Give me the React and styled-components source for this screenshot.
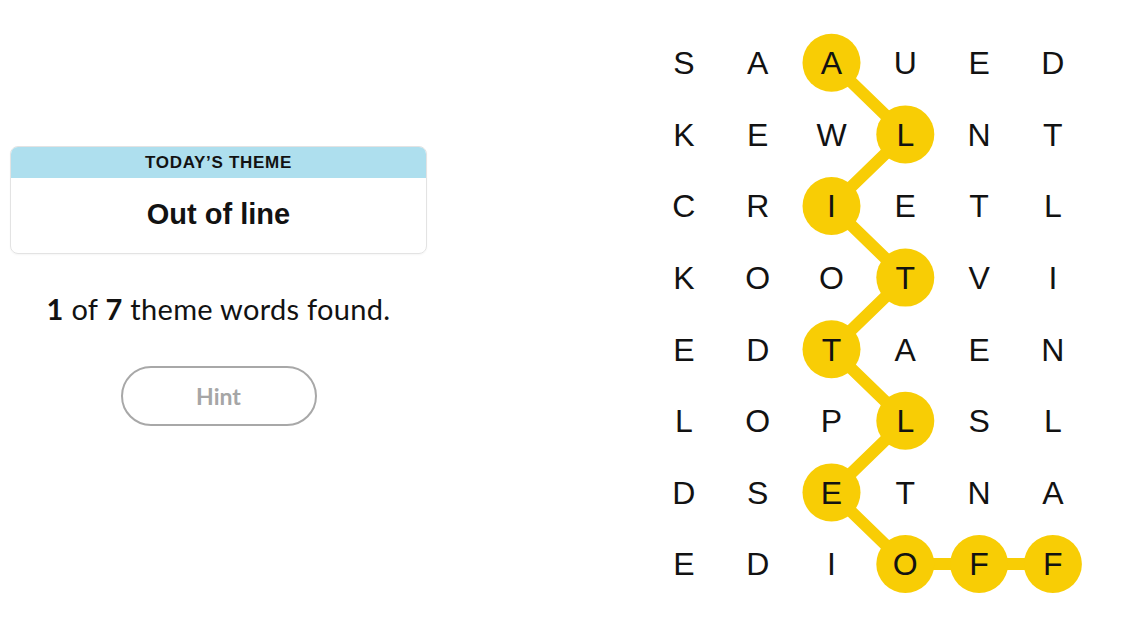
import React from "react";
import styled, { createGlobalStyle } from "styled-components";

const GlobalStyle = createGlobalStyle`
  html, body {
    margin: 0;
    padding: 0;
    background: #ffffff;
  }
  body {
    font-family: "Liberation Sans", Arial, sans-serif;
    color: #000;
  }
`;

const COL_W = 73.8;
const ROW_H = 71.6;
const RADIUS = 29;
const YELLOW = "#f8cd05";

const LETTERS = [
  "SAAUED",
  "KEWLNT",
  "CRIETL",
  "KOOTVI",
  "EDTAEN",
  "LOPLSL",
  "DSETNA",
  "EDIOFF",
];

// path of the spangram, [row, col]
const FOUND = [
  [0, 2], [1, 3], [2, 2], [3, 3], [4, 2],
  [5, 3], [6, 2], [7, 3], [7, 4], [7, 5],
];

const Page = styled.div`
  display: flex;
  width: 1122px;
  height: 631px;
  overflow: hidden;
`;

const Side = styled.aside`
  width: 417px;
  padding: 146px 0 0 10px;
  display: flex;
  flex-direction: column;
  align-items: center;
`;

const ThemeCard = styled.div`
  width: 100%;
  box-sizing: border-box;
  border: 1px solid #e3e3e3;
  border-radius: 8px;
  overflow: hidden;
  box-shadow: 0 1px 2px rgba(0, 0, 0, 0.04);
`;

const ThemeHeader = styled.div`
  height: 31px;
  background: #aedfee;
  display: flex;
  align-items: center;
  justify-content: center;
  font-family: "Liberation Sans", Arial, sans-serif;
  font-weight: 700;
  font-size: 17px;
  letter-spacing: 0.7px;
  color: #121212;
`;

const ThemeTitle = styled.div`
  height: 75px;
  display: flex;
  align-items: center;
  justify-content: center;
  padding-bottom: 2px;
  box-sizing: border-box;
  font-family: "Liberation Sans", Arial, sans-serif;
  font-weight: 700;
  font-size: 29px;
  color: #121212;
`;

const Progress = styled.p`
  margin: 37px 0 0;
  font-family: Lato, "Liberation Sans", sans-serif;
  font-size: 29px;
  letter-spacing: 0.3px;
  color: #121212;
  b {
    font-weight: 700;
  }
`;

const HintButton = styled.button`
  margin-top: 40px;
  width: 196px;
  height: 60px;
  border: 2.5px solid #a8a8a8;
  border-radius: 30px;
  background: #fff;
  font-family: Lato, "Liberation Sans", sans-serif;
  font-weight: 700;
  font-size: 23px;
  color: #a6a6a6;
  cursor: default;
`;

const BoardWrap = styled.div`
  margin: 27px 0 0 220px;
  position: relative;
  width: ${COL_W * 6}px;
  height: ${ROW_H * 8}px;
`;

const Lines = styled.svg`
  position: absolute;
  left: 0;
  top: 0;
  pointer-events: none;
`;

const Grid = styled.div`
  position: relative;
  display: grid;
  grid-template-columns: repeat(6, ${COL_W}px);
  grid-template-rows: repeat(8, ${ROW_H}px);
`;

const Cell = styled.div`
  display: flex;
  align-items: center;
  justify-content: center;
  font-family: "Liberation Sans", Arial, sans-serif;
  font-size: 32px;
  font-weight: 400;
  color: #121212;
  line-height: 1;
  padding-top: 1px;
`;

const center = ([r, c]) => [c * COL_W + COL_W / 2, r * ROW_H + ROW_H / 2];

const Board = () => {
  const points = FOUND.map(center);
  return (
    <BoardWrap>
      <Lines width={COL_W * 6} height={ROW_H * 8}>
        <polyline
          points={points.map((p) => p.join(",")).join(" ")}
          fill="none"
          stroke={YELLOW}
          strokeWidth="12"
          strokeLinejoin="round"
        />
        {points.map(([x, y], i) => (
          <circle key={i} cx={x} cy={y} r={RADIUS} fill={YELLOW} />
        ))}
      </Lines>
      <Grid>
        {LETTERS.map((row, r) =>
          row.split("").map((ch, c) => <Cell key={`${r}-${c}`}>{ch}</Cell>)
        )}
      </Grid>
    </BoardWrap>
  );
};

const App = () => {
  return (
    <Page>
      <GlobalStyle />
      <Side>
        <ThemeCard>
          <ThemeHeader>TODAY’S THEME</ThemeHeader>
          <ThemeTitle>Out of line</ThemeTitle>
        </ThemeCard>
        <Progress>
          <b>1</b> of <b>7</b> theme words found.
        </Progress>
        <HintButton>Hint</HintButton>
      </Side>
      <Board />
    </Page>
  );
};

export default App;
